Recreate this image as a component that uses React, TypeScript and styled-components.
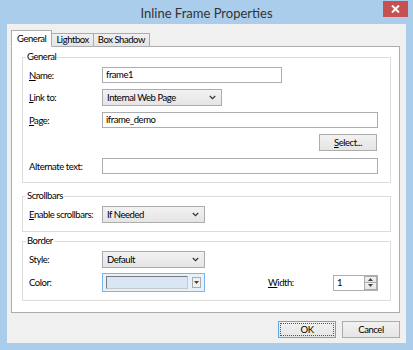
import React from 'react';
import styled, { createGlobalStyle } from 'styled-components';

const Global = createGlobalStyle`
  html, body { margin: 0; padding: 0; }
  body {
    width: 413px; height: 350px; overflow: hidden;
    background: #aacdec;
    font-family: Lato, "Liberation Sans", Arial, sans-serif;
  }
`;

const Window = styled.div`
  width: 413px; height: 350px; box-sizing: border-box;
  background: #aacdec;
  display: flex; flex-direction: column;
`;

const TitleBar = styled.div`
  height: 24px; flex: none;
  display: grid; grid-template-columns: 30px 1fr 30px;
  align-items: center;
`;

const Title = styled.div`
  grid-column: 2; text-align: center;
  font-size: 13px; color: #333; padding-top: 1px;
`;

const CloseBtn = styled.div`
  grid-column: 3; justify-self: end; align-self: start;
  margin: 1px 5px 0 0; width: 25px; height: 16px;
  background: #c75050; display: flex; align-items: center; justify-content: center;
`;

const Client = styled.div`
  flex: 1; margin: 0 7px 7px;
  background: #f0f0f0;
  display: flex; flex-direction: column;
  padding: 6px 6px 5px 4px;
  box-sizing: border-box;
  font-size: 9.5px; letter-spacing: -0.45px; color: #000;
`;

const TabStrip = styled.div`
  display: flex; align-items: flex-end; height: 17px; margin-bottom: -1px;
  position: relative; z-index: 1;
`;

const Tab = styled.div<{ $active?: boolean }>`
  box-sizing: border-box;
  height: ${p => (p.$active ? 17 : 14)}px;
  padding: ${p => (p.$active ? '2px 5px 0' : '0 4px')};
  border: 1px solid #acacac;
  border-bottom: ${p => (p.$active ? '1px solid #fff' : '1px solid #acacac')};
  border-left: ${p => (p.$active ? '1px solid #acacac' : 'none')};
  background: ${p => (p.$active ? '#fff' : 'linear-gradient(#f0f0f0, #e5e5e5)')};
  line-height: 12px; white-space: nowrap;
`;

const Panel = styled.div`
  flex: 1; background: #fff; border: 1px solid #acacac;
  padding: 4px 8px 0 10px;
  display: flex; flex-direction: column;
`;

const Group = styled.fieldset<{ $mt?: number }>`
  margin: ${p => p.$mt ?? 0}px 0 0; min-width: 0;
  border: 1px solid #dcdcdc;
  padding: 4px 12px 8px 6px;
`;

const Legend = styled.legend`
  line-height: 12px; padding: 0 1px; margin-left: -3px;
`;

const Rows = styled.div`
  display: flex; flex-direction: column; gap: 6px;
`;

const Row = styled.div<{ $mt?: number }>`
  display: flex; align-items: center;
  margin-top: ${p => p.$mt ?? 0}px;
`;

const Label = styled.div<{ $w?: number }>`
  width: ${p => p.$w ?? 73}px; flex: none; white-space: nowrap;
`;

const TextBox = styled.div<{ $w?: number }>`
  box-sizing: border-box; height: 16px;
  width: ${p => (p.$w ? `${p.$w}px` : 'auto')}; flex: ${p => (p.$w ? 'none' : '1')};
  border: 1px solid #abadb3; background: #fff;
  line-height: 14px; padding-left: 3px;
`;

const Combo = styled.div<{ $w: number }>`
  box-sizing: border-box; height: 17px; width: ${p => p.$w}px;
  border: 1px solid #acacac; background: linear-gradient(#f2f2f2, #e5e5e5);
  display: flex; align-items: center; justify-content: space-between;
  padding: 0 5px 0 4px;
`;

const PushButton = styled.div<{ $default?: boolean }>`
  box-sizing: border-box; height: 17px; width: 58px;
  border: 1px solid ${p => (p.$default ? '#5aa7ea' : '#acacac')};
  background: linear-gradient(#f2f2f2, #e5e5e5);
  display: flex; align-items: center; justify-content: center;
  position: relative;
  ${p => p.$default ? `
    &::after { content: ''; position: absolute; inset: 1px; border: 1px dotted #555; }
  ` : ''}
`;

const RightRow = styled.div`
  display: flex; justify-content: flex-end; padding-right: 1px;
`;

const ColorCombo = styled.div`
  box-sizing: border-box; width: 103px; height: 19px; flex: none;
  border: 1px solid #7eb4ea; background: #e5f1fb;
  display: flex; align-items: center; gap: 4px; padding: 0 3px;
`;

const Swatch = styled.div`
  flex: 1; height: 11px;
  border: 1px solid #7a7a7a; border-right-color: #c8c8c8; border-bottom-color: #c8c8c8;
  background: #dae6f3;
`;

const SwatchDrop = styled.div`
  width: 9px; height: 11px; box-sizing: border-box;
  border: 1px solid #acacac; background: #f0f0f0;
  display: flex; align-items: center; justify-content: center;
`;

const WidthLabel = styled(Label)`
  margin-left: 63px; width: 65px;
`;

const Spin = styled.div`
  box-sizing: border-box; width: 46px; height: 16px;
  border: 1px solid #abadb3; background: #fff;
  display: flex;
`;

const SpinText = styled.div`
  flex: 1; padding-left: 3px; line-height: 14px;
`;

const SpinBtns = styled.div`
  width: 13px; display: flex; flex-direction: column;
`;

const SpinBtn = styled.div`
  flex: 1; border: 1px solid #acacac; background: linear-gradient(#f2f2f2, #e5e5e5);
  display: flex; align-items: center; justify-content: center;
  & + & { border-top: none; }
`;

const ButtonBar = styled.div`
  display: flex; justify-content: flex-end; gap: 6px; margin-top: 8px;
`;

const Chevron = () => (
  <svg width="7" height="5" viewBox="0 0 7 5">
    <path d="M0.8 1 L3.5 3.7 L6.2 1" fill="none" stroke="#333" strokeWidth="1.2" />
  </svg>
);

const Tri = ({ up }: { up?: boolean }) => (
  <svg width="5" height="3" viewBox="0 0 5 3">
    <path d={up ? 'M0 3 L2.5 0 L5 3 Z' : 'M0 0 L2.5 3 L5 0 Z'} fill="#444" />
  </svg>
);

export default function App() {
  return (
    <Window>
      <Global />
      <TitleBar>
        <Title>Inline Frame Properties</Title>
        <CloseBtn>
          <svg width="9" height="8" viewBox="0 0 9 8">
            <path d="M1 0.5 L8 7.5 M8 0.5 L1 7.5" stroke="#fff" strokeWidth="2" />
          </svg>
        </CloseBtn>
      </TitleBar>
      <Client>
        <TabStrip>
          <Tab $active>General</Tab>
          <Tab>Lightbox</Tab>
          <Tab>Box Shadow</Tab>
        </TabStrip>
        <Panel>
          <Group>
            <Legend>General</Legend>
            <Rows>
              <Row>
                <Label><u>N</u>ame:</Label>
                <TextBox $w={180}>frame1</TextBox>
              </Row>
              <Row>
                <Label><u>L</u>ink to:</Label>
                <Combo $w={120}>Internal Web Page<Chevron /></Combo>
              </Row>
              <Row>
                <Label><u>P</u>age:</Label>
                <TextBox>iframe_demo</TextBox>
              </Row>
              <RightRow>
                <PushButton><span><u>S</u>elect...</span></PushButton>
              </RightRow>
              <Row $mt={1}>
                <Label>Alternate text:</Label>
                <TextBox />
              </Row>
            </Rows>
          </Group>
          <Group $mt={7}>
            <Legend>Scrollbars</Legend>
            <Row>
              <Label><u>E</u>nable scrollbars:</Label>
              <Combo $w={103}>If Needed<Chevron /></Combo>
            </Row>
          </Group>
          <Group $mt={3}>
            <Legend>Border</Legend>
            <Rows>
              <Row>
                <Label>Style:</Label>
                <Combo $w={103}>Default<Chevron /></Combo>
              </Row>
              <Row $mt={-1}>
                <Label>Color:</Label>
                <ColorCombo>
                  <Swatch />
                  <SwatchDrop><Tri /></SwatchDrop>
                </ColorCombo>
                <WidthLabel><u>W</u>idth:</WidthLabel>
                <Spin>
                  <SpinText>1</SpinText>
                  <SpinBtns>
                    <SpinBtn><Tri up /></SpinBtn>
                    <SpinBtn><Tri /></SpinBtn>
                  </SpinBtns>
                </Spin>
              </Row>
            </Rows>
          </Group>
        </Panel>
        <ButtonBar>
          <PushButton $default>OK</PushButton>
          <PushButton>Cancel</PushButton>
        </ButtonBar>
      </Client>
    </Window>
  );
}
